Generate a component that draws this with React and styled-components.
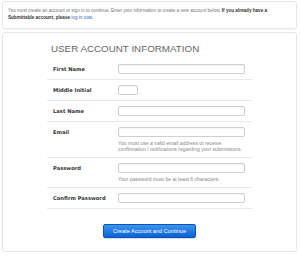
import React from 'react';
import styled, { createGlobalStyle } from 'styled-components';

const GlobalStyle = createGlobalStyle`
  html, body {
    margin: 0;
    padding: 0;
    background: #ffffff;
  }
  body {
    font-family: "Liberation Sans", Arial, sans-serif;
  }
`;

const Page = styled.div`
  width: 300px;
  padding: 1px 3px 0 2px;
  box-sizing: border-box;
`;

const Notice = styled.div`
  border: 1px solid #e6e6e6;
  border-radius: 3px;
  padding: 5px 5px 7px 5px;
  font-size: 4.6px;
  line-height: 7px;
  color: #777;
  box-shadow: 0 1px 1px rgba(0, 0, 0, 0.04);
`;

const Line = styled.div`
  white-space: nowrap;
`;

const Strong = styled.b`
  color: #333;
`;

const Link = styled.a`
  color: #2a6db8;
  text-decoration: none;
`;

const Panel = styled.div`
  margin-top: 3px;
  border: 1px solid #e6e6e6;
  border-radius: 3px;
  padding: 11px 0 13px;
  box-shadow: 0 1px 1px rgba(0, 0, 0, 0.04);
`;

const Form = styled.div`
  width: 205px;
  margin: 0 auto;
`;

const Heading = styled.h2`
  margin: 0 0 5px 4px;
  font-weight: normal;
  font-size: 9.8px;
  line-height: 10px;
  color: #666;
`;

const Row = styled.div`
  display: grid;
  grid-template-columns: 65px 1fr;
  padding: 5px 6px 5px 6px;
  border-bottom: 1px solid #e9e9e9;
`;

const Label = styled.div`
  font-family: "DejaVu Sans", Verdana, sans-serif;
  font-weight: bold;
  font-size: 5.2px;
  line-height: 10px;
  color: #333;
`;

const Field = styled.div`
  display: flex;
  flex-direction: column;
`;

const Input = styled.div`
  width: ${p => p.$w || 127}px;
  height: 10px;
  box-sizing: border-box;
  border: 1px solid #cfcfcf;
  border-radius: 2px;
  background: #fff;
  box-shadow: inset 0 1px 1px rgba(0, 0, 0, 0.05);
`;

const Help = styled.div`
  margin-top: 3px;
  font-size: 5.1px;
  line-height: 6px;
  color: #888;
  white-space: nowrap;
`;

const Actions = styled.div`
  display: flex;
  justify-content: center;
  padding-top: 15px;
`;

const Button = styled.button`
  width: 93px;
  height: 14px;
  padding: 0;
  border: 1px solid #0a56b8;
  border-radius: 2px;
  background: linear-gradient(#3b95ee, #0b62d6);
  color: #fff;
  font-family: "Liberation Sans", Arial, sans-serif;
  font-size: 5.6px;
  line-height: 12px;
  box-shadow: 0 1px 1px rgba(0, 0, 0, 0.15);
`;

const fields = [
  { label: 'First Name' },
  { label: 'Middle Initial', width: 20 },
  { label: 'Last Name' },
  {
    label: 'Email',
    help: ['You must use a valid email address to receive', 'confirmation / notifications regarding your submissions.'],
  },
  { label: 'Password', help: ['Your password must be at least 6 characters.'] },
  { label: 'Confirm Password' },
];

export default function App() {
  return (
    <Page>
      <GlobalStyle />
      <Notice>
        <Line>
          You must create an account or sign in to continue. Enter your information to create a new account below.{' '}
          <Strong>If you already have a</Strong>
        </Line>
        <Line>
          <Strong>Submittable account, please</Strong> <Link href="#">log in now.</Link>
        </Line>
      </Notice>
      <Panel>
        <Form>
          <Heading>USER ACCOUNT INFORMATION</Heading>
          {fields.map(f => (
            <Row key={f.label}>
              <Label>{f.label}</Label>
              <Field>
                <Input $w={f.width} />
                {f.help && (
                  <Help>
                    {f.help.map((line, i) => (
                      <React.Fragment key={i}>
                        {i > 0 && <br />}
                        {line}
                      </React.Fragment>
                    ))}
                  </Help>
                )}
              </Field>
            </Row>
          ))}
          <Actions>
            <Button>Create Account and Continue</Button>
          </Actions>
        </Form>
      </Panel>
    </Page>
  );
}
